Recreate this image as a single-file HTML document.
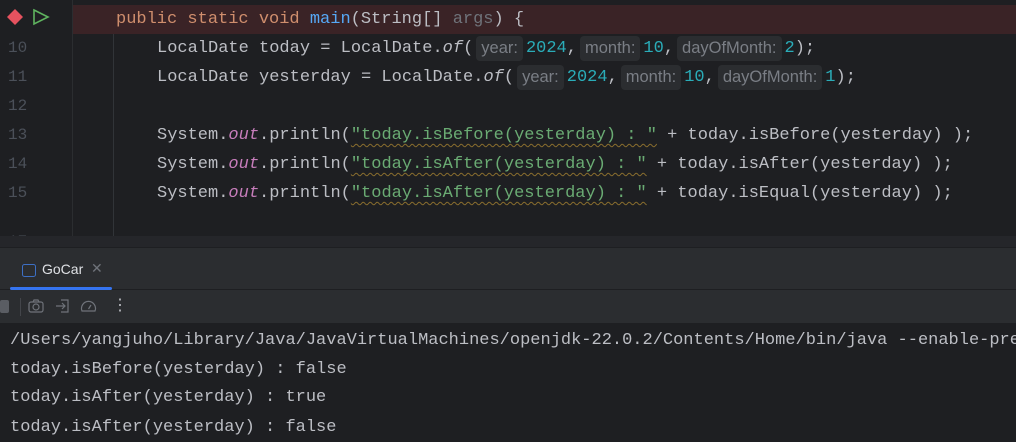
<!DOCTYPE html>
<html><head><meta charset="utf-8"><style>
*{margin:0;padding:0;box-sizing:border-box}
body{width:1016px;height:440px;overflow:hidden;background:#1e1f22;font-family:"Liberation Mono",monospace;font-size:17px;color:#bcbec4;position:relative}
.ed{position:absolute;left:0;top:0;width:1016px;height:236px;background:#1e1f22;overflow:hidden}
.gut{position:absolute;left:72px;top:0;width:1px;height:236px;background:#2b2d30}
.guide{position:absolute;left:113px;top:34px;width:1px;height:210px;background:#313438}
.hl{position:absolute;left:73px;top:5px;width:943px;height:29px;background:#3a2326}
.ln{position:absolute;left:0;height:29px;line-height:29px;white-space:pre}
.num{position:absolute;left:8px;color:#4b5059;height:29px;line-height:29px;font-size:16px}
.k{color:#cf8e6d}.f{color:#56a8f5}.g{color:#6f737a}.n{color:#2aacb8}.s{color:#6aab73;text-decoration:underline wavy #8a6e2e;text-underline-offset:4px;text-decoration-thickness:1px}.st{color:#c77dbb;font-style:italic}.i{font-style:italic}
.h{display:inline-block;vertical-align:top;margin-top:2px;height:25px;line-height:25px;font-family:"Liberation Sans",sans-serif;font-size:16.5px;color:#7a7e85;background:#2b2d30;border-radius:4px;padding:0 5px;margin-left:3px;margin-right:3px}
.band{position:absolute;left:0;top:236px;width:1016px;height:11px;background:#25262a}
.tabs{position:absolute;left:0;top:247px;width:1016px;height:43px;background:#2b2d30;border-top:1px solid #1e1f22;border-bottom:1px solid #1e1f22}
.tb{position:absolute;left:0;top:290px;width:1016px;height:33px;background:#2b2d30}
.out{position:absolute;left:10px;white-space:pre;height:29px;line-height:29px;color:#bcbec4}
</style></head><body>
<div class="ed">
<div class="hl"></div>
<div class="gut"></div>
<div class="guide"></div>
<svg style="position:absolute;left:6px;top:8px" width="18" height="18"><path d="M9 1 L17 9 L9 17 L1 9Z" fill="#e5525f"/></svg>
<svg style="position:absolute;left:32px;top:8px" width="18" height="18"><path d="M2 2 L16 9 L2 16Z" fill="none" stroke="#5fb35f" stroke-width="1.6"/></svg>
<div class="ln" style="left:116px;top:5px"><span class="k">public static void</span> <span class="f">main</span>(String[] <span class="g">args</span>) {</div>
<div class="num" style="top:34px">10</div>
<div class="ln" style="left:157px;top:34px">LocalDate today = LocalDate.<span class="i">of</span>(<span class="h">year:</span><span class="n">2024</span>,<span class="h">month:</span><span class="n">10</span>,<span class="h">dayOfMonth:</span><span class="n">2</span>);</div>
<div class="num" style="top:63px">11</div>
<div class="ln" style="left:157px;top:63px">LocalDate yesterday = LocalDate.<span class="i">of</span>(<span class="h">year:</span><span class="n">2024</span>,<span class="h">month:</span><span class="n">10</span>,<span class="h">dayOfMonth:</span><span class="n">1</span>);</div>
<div class="num" style="top:92px">12</div>
<div class="num" style="top:121px">13</div>
<div class="ln" style="left:157px;top:121px">System.<span class="st">out</span>.println(<span class="s">"today.isBefore(yesterday) : "</span> + today.isBefore(yesterday) );</div>
<div class="num" style="top:150px">14</div>
<div class="ln" style="left:157px;top:150px">System.<span class="st">out</span>.println(<span class="s">"today.isAfter(yesterday) : "</span> + today.isAfter(yesterday) );</div>
<div class="num" style="top:179px">15</div>
<div class="ln" style="left:157px;top:179px">System.<span class="st">out</span>.println(<span class="s">"today.isAfter(yesterday) : "</span> + today.isEqual(yesterday) );</div>
<div class="num" style="top:228px">17</div>
</div>
<div class="band"></div>
<div class="tabs">
<svg style="position:absolute;left:22px;top:16px" width="14" height="13"><rect x="0.5" y="0.5" width="13" height="12" rx="2" fill="none" stroke="#3d6fc4"/></svg>
<div style="position:absolute;left:42px;top:13px;font-family:'Liberation Sans',sans-serif;font-size:14px;color:#dfe1e5">GoCar</div>
<div style="position:absolute;left:91px;top:12px;font-family:'Liberation Sans',sans-serif;font-size:14px;color:#6f737a">✕</div>
<div style="position:absolute;left:10px;top:39px;width:102px;height:3px;background:#3574f0;border-radius:2px"></div>
</div>
<div class="tb">
<div style="position:absolute;left:0;top:10px;width:9px;height:13px;background:#5a5d63;border-radius:2px"></div>
<div style="position:absolute;left:20px;top:8px;width:1px;height:18px;background:#43454a"></div>
<svg style="position:absolute;left:28px;top:9px" width="16" height="15" fill="none" stroke="#6f737a" stroke-width="1.2"><rect x="1" y="3" width="14" height="10" rx="2"/><circle cx="8" cy="8" r="3"/><path d="M5 3 L6 1 H10 L11 3"/></svg>
<svg style="position:absolute;left:55px;top:8px" width="16" height="16" fill="none" stroke="#6f737a" stroke-width="1.2"><path d="M6 2 H13 V14 H6"/><path d="M1 8 H10 M7 5 L10 8 L7 11"/></svg>
<svg style="position:absolute;left:80px;top:8px" width="18" height="17" fill="none" stroke="#6f737a" stroke-width="1.2"><path d="M2 13 A7 7 0 1 1 15 13 Z"/><path d="M8.5 11 L11 7"/></svg>
<div style="position:absolute;left:112px;top:7px;color:#bcbec4;font-family:'Liberation Sans',sans-serif;font-size:16px;line-height:18px">⋮</div>
</div>
<div class="out" style="top:326px">/Users/yangjuho/Library/Java/JavaVirtualMachines/openjdk-22.0.2/Contents/Home/bin/java --enable-preview</div>
<div class="out" style="top:355px">today.isBefore(yesterday) : false</div>
<div class="out" style="top:383px">today.isAfter(yesterday) : true</div>
<div class="out" style="top:413px">today.isAfter(yesterday) : false</div>
</body></html>
